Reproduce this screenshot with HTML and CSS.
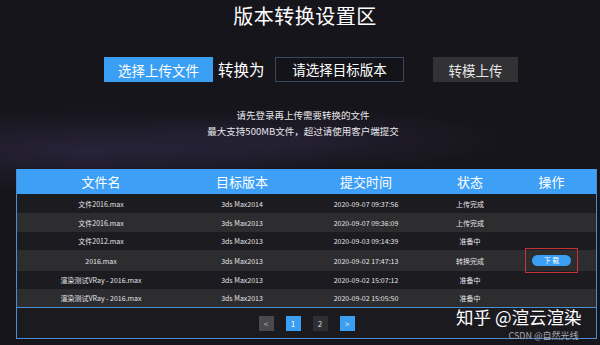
FILE: index.html
```html
<html>
  <head>
    <title>版本转换设置区</title>
    <link rel="stylesheet" href="styles.css">
  </head>
  <body>
    <div class="page">
      <h1 class="title">版本转换设置区</h1>
      <div class="toolbar">
        <button class="btn btn-upload">选择上传文件</button>
        <span class="to">转换为</span>
        <div class="select">请选择目标版本</div>
        <button class="btn btn-convert">转模上传</button>
      </div>
      <p class="notice">请先登录再上传需要转换的文件<br/>最大支持500MB文件，超过请使用客户端提交</p>

      <div class="table-box">
        <table class="list">
          <colgroup>
            <col class="c-name"/><col class="c-ver"/><col class="c-time"/><col class="c-state"/><col class="c-op"/>
          </colgroup>
          <thead>
            <tr><th>文件名</th><th>目标版本</th><th>提交时间</th><th>状态</th><th>操作</th></tr>
          </thead>
          <tbody>
            <tr><td>文件2016.max</td><td>3ds Max2014</td><td>2020-09-07 09:37:56</td><td>上传完成</td><td></td></tr>
            <tr><td>文件2016.max</td><td>3ds Max2013</td><td>2020-09-07 09:36:09</td><td>上传完成</td><td></td></tr>
            <tr><td>文件2012.max</td><td>3ds Max2013</td><td>2020-09-03 09:14:39</td><td>准备中</td><td></td></tr>
            <tr class="dl"><td>2016.max</td><td>3ds Max2013</td><td>2020-09-02 17:47:13</td><td>转换完成</td>
              <td><span class="mark"><button class="pill">下 载</button></span></td></tr>
            <tr><td>渲染测试VRay - 2016.max</td><td>3ds Max2013</td><td>2020-09-02 15:07:12</td><td>准备中</td><td></td></tr>
            <tr><td>渲染测试VRay - 2016.max</td><td>3ds Max2013</td><td>2020-09-02 15:05:50</td><td>准备中</td><td></td></tr>
          </tbody>
        </table>
        <div class="pager">
          <span class="pg pg-off">&lt;</span>
          <span class="pg pg-on">1</span>
          <span class="pg">2</span>
          <span class="pg pg-on">&gt;</span>
        </div>
      </div>

      <div class="watermark">
        <div class="wm-big">知乎 @渲云渲染</div>
        <div class="wm-small">CSDN @自然光线</div>
      </div>
    </div>
  </body>
</html>
```

FILE: styles.css
```css
* {box-sizing: border-box;}
html, body {margin: 0; padding: 0; overflow: hidden;}
body {
  width: 600px; height: 345px;
  font-family: "Noto Sans CJK SC", "Noto Sans", sans-serif;
  color: #fff;
  background-color: #17151c;
  background-image:
    radial-gradient(ellipse 260px 40px at 90px 150px, rgba(70,60,110,0.35), rgba(0,0,0,0)),
    radial-gradient(ellipse 200px 30px at 300px 140px, rgba(70,60,110,0.25), rgba(0,0,0,0));
}
.page {position: relative; width: 600px; height: 345px;}

.title {margin: 0; padding-top: 4px; padding-left: 10px; font-size: 20px; line-height: 24px; font-weight: 400; text-align: center; letter-spacing: 0.5px;}

.toolbar {display: flex; align-items: center; height: 25px; margin-top: 29px; padding-left: 104px;}
.btn {height: 25px; border: none; padding: 0; font-family: inherit; font-size: 13.5px; color: #fff; cursor: pointer;}
.btn-upload {width: 109px; background: #3a9ef2;}
.to {margin-left: 5px; font-size: 15.5px; line-height: 25px; width: 47px;}
.select {margin-left: 10px; width: 129px; height: 25px; line-height: 23px; font-size: 13.5px; text-align: center; border: 1px solid #3a4a5c; background: #141319;}
.btn-convert {margin-left: 29px; width: 85px; background: #323235; color: #e6e6e6;}

.notice {margin: 25px 0 0; padding-left: 6px; font-size: 9.5px; line-height: 16px; text-align: center; color: #e8e8ea;}

.table-box {margin: 30px 0 0 16px; width: 581px; border: 1px solid #4b8dd2; border-top: none; background: #1b1a1f;}
.list {width: 100%; border-collapse: collapse; table-layout: fixed;}
.c-name {width: 168px;} .c-ver {width: 114px;} .c-time {width: 134px;} .c-state {width: 74px;} .c-op {width: 89px;}
.list th {height: 25px; padding: 0; background: #3d9ff5; font-size: 13px; font-weight: 400; color: #fff;}
.list td {padding: 0; text-align: center; font-size: 7px; line-height: 10px; color: #e4e4e6; white-space: nowrap;}
.list tbody tr {height: 19px; background: #1c1b20;}
.list tbody tr:nth-child(n+3) {height: 18px;}
.list tbody tr.dl {height: 21px;}
.list tbody tr:nth-child(even) {background: #2d2d30;}

.mark {display: inline-block; vertical-align: middle; margin: -4px 0; padding: 6px 6px; border: 1px solid #c8303a; line-height: 0;}
.pill {width: 39px; height: 11px; padding: 0; border: none; border-radius: 6px; background: #3a9ef2; color: #fff; font-family: inherit; font-size: 7px; line-height: 11px;}

.pager {display: flex; justify-content: center; gap: 12px; height: 31px; padding-top: 8px; border-top: 1px solid #4b8dd2;}
.pg {width: 15px; height: 15px; line-height: 15px; text-align: center; font-size: 8px; background: #2f2f33; color: #d8d8d8;}
.pg-off {background: #4a4a4d; color: #bdbdbd;}
.pg-on {background: #3a9ef2; color: #fff;}

.watermark {position: absolute; left: 456px; top: 307px; text-align: right;}
.wm-big {font-size: 17.5px; line-height: 19px; color: #fff; white-space: nowrap;}
.wm-small {font-size: 9px; line-height: 10px; color: #a9a9ad; margin-top: 5px; padding-right: 3px; white-space: nowrap;}
```
